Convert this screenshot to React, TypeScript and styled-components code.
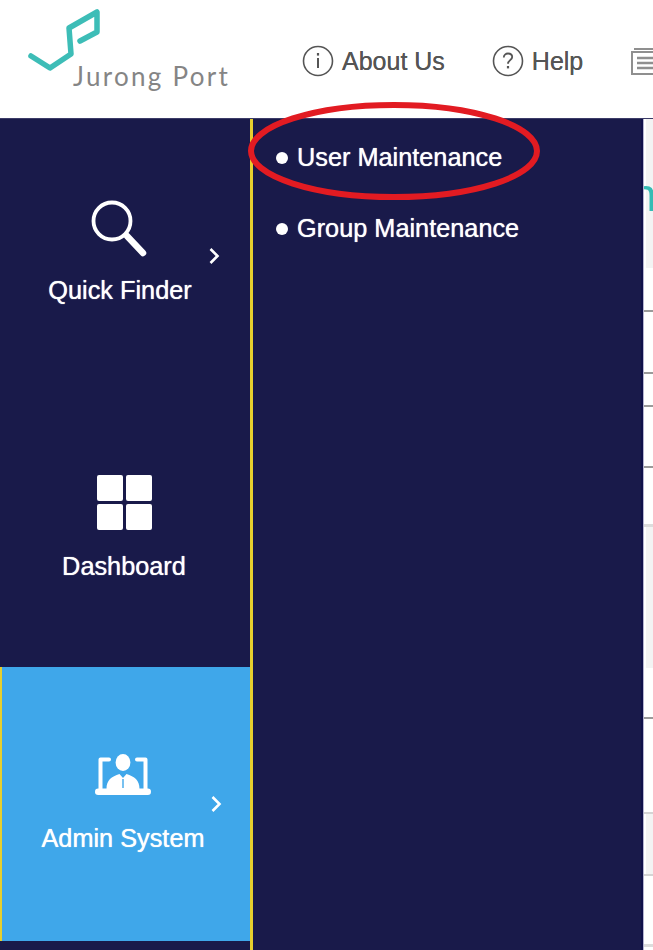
import styled, { createGlobalStyle } from "styled-components";

const GlobalStyle = createGlobalStyle`
  html, body {
    margin: 0;
    padding: 0;
    background: #ffffff;
    overflow: hidden;
  }
`;

const Page = styled.div`
  position: relative;
  width: 653px;
  height: 950px;
  overflow: hidden;
  display: flex;
  flex-direction: column;
  font-family: "Liberation Sans", Arial, sans-serif;
  font-size: 25.3px;
  filter: blur(0.45px);
`;

/* top bar */
const Header = styled.header`
  height: 118px;
  flex: none;
  display: flex;
  align-items: flex-start;
  padding-left: 28px;
  background: #ffffff;
  border-bottom: 1px solid #3c3c68;
  overflow: hidden;
`;

const Logo = styled.div`
  width: 274px;
  flex: none;
  padding-top: 9px;
  display: flex;
  flex-direction: column;
`;

const Wordmark = styled.span`
  margin: -9px 0 0 45px;
  font-family: Lato, "Noto Sans", sans-serif;
  font-size: 26px;
  line-height: 28px;
  letter-spacing: 2.3px;
  color: #858585;
  white-space: nowrap;
`;

const Nav = styled.nav`
  display: flex;
  gap: 47px;
  padding-top: 45px;
  white-space: nowrap;
  font-size: 25px;
`;

const NavItem = styled.a`
  display: flex;
  align-items: center;
  gap: 8px;
  height: 32px;
  color: #555555;
  line-height: 30px;
  text-shadow: 0 0 0.6px #555555;
`;

/* body */
const Main = styled.div`
  flex: 1;
  display: flex;
  min-height: 0;
`;

const Sidebar = styled.aside`
  width: 250px;
  flex: none;
  display: flex;
  flex-direction: column;
  background: #191a4a;
`;

const SideItem = styled.div<{ $active?: boolean; $shift: number; $gap?: number }>`
  position: relative;
  box-sizing: border-box;
  height: 274px;
  flex: none;
  display: flex;
  flex-direction: column;
  align-items: center;
  justify-content: center;
  gap: ${(p) => p.$gap ?? 18}px;
  padding-bottom: ${(p) => 27 - (p.$gap ?? 18)}px;
  padding-right: ${(p) => p.$shift}px;
  color: #ffffff;
  background: ${(p) => (p.$active ? "#3fa7ea" : "transparent")};
  border-left: ${(p) => (p.$active ? "2px solid #e6cf2e" : "none")};
`;

const IconSlot = styled.div`
  height: 60px;
  display: flex;
  align-items: center;
  justify-content: center;
`;

const SideLabel = styled.span`
  line-height: 29px;
  white-space: nowrap;
  text-shadow: 0 0 0.9px #ffffff;
`;

const Chevron = styled.svg`
  position: absolute;
  left: 208px;
  top: calc(50% - 9px);
`;

const Divider = styled.div`
  width: 3px;
  flex: none;
  background: #e6cf2e;
`;

const Submenu = styled.div`
  width: 390px;
  flex: none;
  padding: 3px 0 0 23px;
  box-sizing: border-box;
  background: #191a4a;
  border-right: 2px solid #10114a;
`;

const SubItem = styled.div`
  height: 71px;
  display: flex;
  align-items: center;
  gap: 9px;
  color: #ffffff;
  white-space: nowrap;
  text-shadow: 0 0 0.9px #ffffff;
  &::before {
    content: "";
    width: 12px;
    height: 12px;
    border-radius: 50%;
    background: #ffffff;
  }
`;

/* sliver of the page behind the menu */
const Content = styled.div`
  flex: 1;
  min-width: 0;
  display: flex;
  flex-direction: column;
  overflow: hidden;
  border-left: 1px solid #b4b4d0;
`;

const Block = styled.div<{ $h: number; $shaded?: boolean; $line?: string; $band?: boolean }>`
  height: ${(p) => p.$h}px;
  flex: none;
  box-sizing: border-box;
  background: ${(p) =>
    p.$shaded ? "linear-gradient(90deg, #ffffff 2px, #f3f3f3 2px)" : "#ffffff"};
  border-top: ${(p) => (p.$band ? "3px solid #dcdcdc" : "none")};
  border-bottom: ${(p) => (p.$line ? `2px solid ${p.$line}` : "none")};
`;

const Heading = styled.div`
  margin: 51px 0 0 -13px;
  font-size: 46px;
  line-height: 50px;
  color: #35bcb4;
  white-space: nowrap;
`;

const Annotation = styled.svg`
  position: absolute;
  left: 244px;
  top: 98px;
  pointer-events: none;
`;

const CircleIcon = ({ glyph }: { glyph: "info" | "help" }) => (
  <svg width="32" height="32" viewBox="0 0 32 32" fill="none" stroke="#555555">
    <circle cx="16" cy="16" r="14.5" strokeWidth="1.6" />
    {glyph === "info" ? (
      <>
        <path d="M16 13v10" strokeWidth="2" />
        <path d="M16 8v2.6" strokeWidth="2.2" />
      </>
    ) : (
      <>
        <path d="M11.8 12.4c0-2.4 1.9-3.9 4.2-3.9s4.2 1.4 4.2 3.6c0 3-4.2 3.2-4.2 6.6" strokeWidth="1.8" />
        <path d="M16 21v2.4" strokeWidth="2.2" />
      </>
    )}
  </svg>
);

const DocIcon = () => (
  <svg width="34" height="32" viewBox="0 0 34 32" fill="none" stroke="#8f8f8f" strokeWidth="2">
    <path d="M4 4h26v3M2 7h30v22H2z" />
    <path d="M7 13h24M7 18h24M7 23h24" strokeWidth="2.4" />
  </svg>
);

const SearchIcon = () => (
  <svg width="60" height="60" viewBox="0 0 60 60" fill="none" stroke="#ffffff">
    <circle cx="22" cy="23" r="18.5" strokeWidth="3.8" />
    <path d="M37 38l16 17" strokeWidth="6.5" strokeLinecap="round" />
  </svg>
);

const GridIcon = () => (
  <svg width="55" height="55" viewBox="0 0 55 55" fill="#ffffff">
    <rect x="0" y="0" width="26" height="26" rx="2" />
    <rect x="29" y="0" width="26" height="26" rx="2" />
    <rect x="0" y="29" width="26" height="26" rx="2" />
    <rect x="29" y="29" width="26" height="26" rx="2" />
  </svg>
);

const AdminIcon = () => (
  <svg width="56" height="44" viewBox="0 0 56 44" fill="none">
    <path d="M14 5.5H5.5v30M42 5.5h8.5v30" stroke="#ffffff" strokeWidth="4" strokeLinecap="round" strokeLinejoin="round" />
    <rect x="0" y="34.5" width="56" height="6.5" rx="3.2" fill="#ffffff" />
    <ellipse cx="28" cy="8.5" rx="7.4" ry="8.5" fill="#ffffff" />
    <path d="M11.5 35c0-9 5-12.500 13-15l3.500 4 3.500-4c8 2.500 13 6 13 15z" fill="#ffffff" />
    <path d="M28 25v9" stroke="#3fa7ea" strokeWidth="1.4" />
  </svg>
);

const ChevronRight = () => (
  <Chevron width="12" height="18" viewBox="0 0 12 18" fill="none" stroke="#ffffff" strokeWidth="2.6">
    <path d="M2.500 2l7 7-7 7" />
  </Chevron>
);

export default function App() {
  return (
    <Page>
      <GlobalStyle />
      <Header>
        <Logo>
          <svg width="74" height="62" viewBox="0 0 74 62" fill="none" stroke="#3dbdb7" strokeWidth="5.5" strokeLinecap="round" strokeLinejoin="round">
            <path d="M3 47l19 12 21-14 -2-26L69 3v20l-17 9" />
          </svg>
          <Wordmark>Jurong Port</Wordmark>
        </Logo>
        <Nav>
          <NavItem>
            <CircleIcon glyph="info" />
            About Us
          </NavItem>
          <NavItem>
            <CircleIcon glyph="help" />
            Help
          </NavItem>
          <NavItem>
            <DocIcon />
          </NavItem>
        </Nav>
      </Header>

      <Main>
        <Sidebar>
          <SideItem $shift={10}>
            <IconSlot>
              <SearchIcon />
            </IconSlot>
            <SideLabel>Quick Finder</SideLabel>
            <ChevronRight />
          </SideItem>
          <SideItem $shift={2} $gap={20}>
            <IconSlot>
              <GridIcon />
            </IconSlot>
            <SideLabel>Dashboard</SideLabel>
          </SideItem>
          <SideItem $active $shift={6}>
            <IconSlot>
              <AdminIcon />
            </IconSlot>
            <SideLabel>Admin System</SideLabel>
            <ChevronRight />
          </SideItem>
        </Sidebar>
        <Divider />
        <Submenu>
          <SubItem>User Maintenance</SubItem>
          <SubItem>Group Maintenance</SubItem>
        </Submenu>
        <Content>
          <Block $h={149} $shaded>
            <Heading>n</Heading>
          </Block>
          <Block $h={44} $line="#9a9a9a" />
          <Block $h={62} $line="#9a9a9a" />
          <Block $h={33} $line="#9a9a9a" />
          <Block $h={61} $line="#9a9a9a" />
          <Block $h={56} />
          <Block $h={144} $shaded $band />
          <Block $h={51} $line="#9a9a9a" />
          <Block $h={95} $line="#d4d4d4" />
          <Block $h={62} $shaded $line="#d4d4d4" />
          <Block $h={68} />
          <Block $h={3} $band />
        </Content>
      </Main>

      <Annotation width="300" height="106" viewBox="0 0 300 106" fill="none">
        <ellipse cx="150" cy="53" rx="143" ry="46" stroke="#e21b22" strokeWidth="6" />
      </Annotation>
    </Page>
  );
}
